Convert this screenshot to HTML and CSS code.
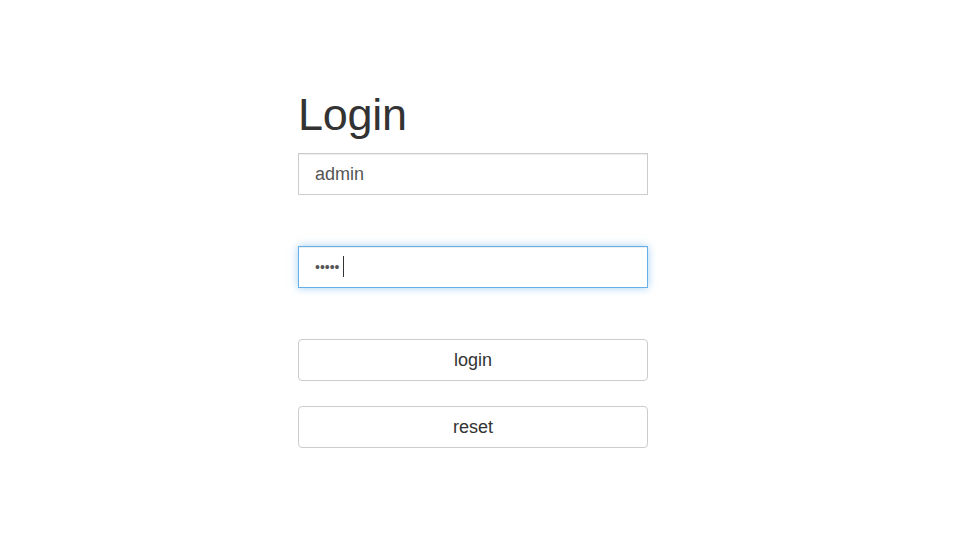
FILE: index.html
```html
<!DOCTYPE html>
<html>
<head>
<meta charset="utf-8">
<title>Login</title>
<link rel="stylesheet" href="styles.css">
</head>
<body>
<div class="page">
  <form class="login-form">
    <h1 class="title">Login</h1>
    <input class="field" type="text" value="admin">
    <div class="field-wrap">
      <input class="field field-focus" type="password" value="admin">
      <span class="caret"></span>
    </div>
    <button class="btn btn-login" type="button">login</button>
    <button class="btn btn-reset" type="button">reset</button>
  </form>
</div>
</body>
</html>
```

FILE: styles.css
```css
html, body {
  margin: 0;
  padding: 0;
  background: #fff;
}
body {
  font-family: "Liberation Sans", Arial, sans-serif;
  color: #333;
}
.page {
  display: flex;
  justify-content: flex-start;
  padding-left: 298px;
  padding-top: 89px;
}
.login-form {
  display: flex;
  flex-direction: column;
  width: 350px;
}
.title {
  margin: 0 0 12px 0;
  font-size: 45px;
  font-weight: 400;
  line-height: 52px;
  color: #333;
  letter-spacing: -0.3px;
}
.field {
  box-sizing: border-box;
  width: 350px;
  height: 42px;
  margin: 0;
  padding: 0 16px;
  border: 1px solid #ccc;
  border-radius: 0;
  font-family: "Liberation Sans", Arial, sans-serif;
  font-size: 18px;
  color: #555;
  background: #fff;
  outline: none;
  box-shadow: inset 0 1px 1px rgba(0,0,0,.075);
}
.field-wrap {
  position: relative;
  margin-top: 51px;
  height: 42px;
}
.field-focus {
  display: block;
  border-color: #66afe9;
  box-shadow: inset 0 1px 1px rgba(0,0,0,.075), 0 0 8px rgba(102,175,233,.6);
  font-size: 14px;
  letter-spacing: 0;
}
.caret {
  position: absolute;
  left: 45px;
  top: 10px;
  width: 1px;
  height: 21px;
  background: #333;
}
.btn {
  box-sizing: border-box;
  width: 350px;
  height: 42px;
  margin: 0;
  padding: 0;
  border: 1px solid #ccc;
  border-radius: 4px;
  background: #fff;
  color: #333;
  font-family: "Liberation Sans", Arial, sans-serif;
  font-size: 18px;
  cursor: pointer;
}
.btn-login {
  margin-top: 51px;
}
.btn-reset {
  margin-top: 25px;
}
```
